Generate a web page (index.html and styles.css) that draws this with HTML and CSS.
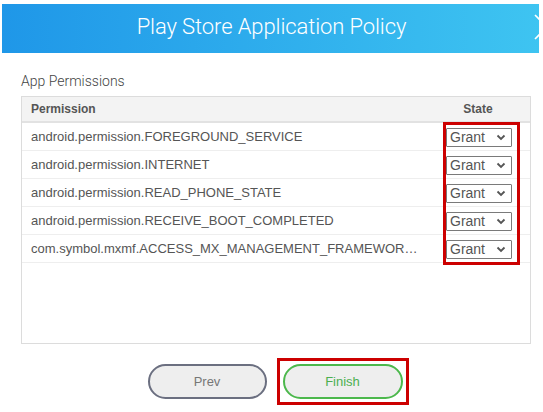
FILE: index.html
```html
<!DOCTYPE html>
<html>
<head>
<meta charset="utf-8">
<link rel="stylesheet" href="styles.css">
</head>
<body>
<div class="header">
  <div class="title">Play Store Application Policy</div>
  <div class="close"><svg width="20" height="28" viewBox="0 0 20 28"><path d="M2 2 L14 14 L2 26" fill="none" stroke="#fff" stroke-width="1.6"/></svg></div>
</div>
<div class="content">
  <div class="label">App Permissions</div>
  <div class="grid">
    <div class="grid-head">
      <div class="col-perm">Permission</div>
      <div class="col-state">State</div>
    </div>
    <div class="row"><div class="col-perm">android.permission.FOREGROUND_SERVICE</div><div class="col-state"><div class="select">Grant<svg class="chev" width="10" height="7" viewBox="0 0 10 7"><path d="M1.5 1.5 L5 5 L8.5 1.5" fill="none" stroke="#555" stroke-width="1.8"/></svg></div></div></div>
    <div class="row"><div class="col-perm">android.permission.INTERNET</div><div class="col-state"><div class="select">Grant<svg class="chev" width="10" height="7" viewBox="0 0 10 7"><path d="M1.5 1.5 L5 5 L8.5 1.5" fill="none" stroke="#555" stroke-width="1.8"/></svg></div></div></div>
    <div class="row"><div class="col-perm">android.permission.READ_PHONE_STATE</div><div class="col-state"><div class="select">Grant<svg class="chev" width="10" height="7" viewBox="0 0 10 7"><path d="M1.5 1.5 L5 5 L8.5 1.5" fill="none" stroke="#555" stroke-width="1.8"/></svg></div></div></div>
    <div class="row"><div class="col-perm">android.permission.RECEIVE_BOOT_COMPLETED</div><div class="col-state"><div class="select">Grant<svg class="chev" width="10" height="7" viewBox="0 0 10 7"><path d="M1.5 1.5 L5 5 L8.5 1.5" fill="none" stroke="#555" stroke-width="1.8"/></svg></div></div></div>
    <div class="row"><div class="col-perm">com.symbol.mxmf.ACCESS_MX_MANAGEMENT_FRAMEWORK_PERMISSION</div><div class="col-state"><div class="select">Grant<svg class="chev" width="10" height="7" viewBox="0 0 10 7"><path d="M1.5 1.5 L5 5 L8.5 1.5" fill="none" stroke="#555" stroke-width="1.8"/></svg></div></div></div>
    <div class="highlight state-box"></div>
  </div>
  <div class="buttons">
    <button class="btn btn-prev">Prev</button>
    <div class="finish-wrap"><button class="btn btn-finish">Finish</button></div>
  </div>
</div>
</body>
</html>
```
FILE: styles.css
```css
* { box-sizing: border-box; }
body {
  margin: 0;
  background: #fff;
  font-family: Roboto, "Liberation Sans", Arial, sans-serif;
  color: #555;
}
.header {
  position: relative;
  overflow: hidden;
  margin: 4px 4px 0 2px;
  height: 49px;
  background: linear-gradient(to right, #1f97e8, #3ec4f1);
  display: flex;
  align-items: center;
  justify-content: center;
  padding-bottom: 5px;
}
.title {
  color: #fff;
  font-size: 22px;
  font-weight: 300;
  letter-spacing: -0.1px;
  padding-left: 2px;
}
.close {
  position: absolute;
  right: -8px;
  top: 9px;
  width: 14px;
  height: 28px;
}
.content {
  padding: 0 12px 0 21px;
}
.label {
  margin-top: 19px;
  font-size: 14px;
  font-weight: 300;
  line-height: 18px;
  height: 24px;
  color: #444;
}
.grid {
  position: relative;
  height: 248px;
  border: 1px solid #dcdcdc;
  font-family: "Liberation Sans", Arial, sans-serif;
}
.grid-head {
  display: flex;
  height: 26px;
  align-items: center;
  background: #f3f3f3;
  border-bottom: 2px solid #e2e2e2;
  font-weight: bold;
  font-size: 12px;
  color: #555;
}
.row {
  display: flex;
  align-items: center;
  height: 28px;
  border-bottom: 1px solid #eeeeee;
  font-size: 13px;
  color: #555;
}
.col-perm {
  flex: 1;
  min-width: 0;
  padding-left: 9px;
  padding-right: 15px;
  white-space: nowrap;
  overflow: hidden;
  text-overflow: ellipsis;
}
.col-state {
  width: 90px;
  flex: none;
  display: flex;
  justify-content: center;
  padding-right: 12px;
}
.grid-head .col-state {
  padding-right: 14px;
}
.select {
  width: 66px;
  height: 19px;
  border: 1px solid #7a7a7a;
  border-radius: 1px;
  display: flex;
  align-items: center;
  justify-content: space-between;
  padding: 0 5px 0 3px;
  font-size: 14px;
  color: #555;
  margin-top: 1px;
}
.chev { display: block; }
.highlight {
  position: absolute;
  border: 3px solid #cc0000;
}
.state-box {
  left: 421px;
  top: 25px;
  width: 77px;
  height: 143px;
}
.buttons {
  display: flex;
  justify-content: center;
  align-items: center;
  gap: 10px;
  margin-top: 14px;
  padding-left: 4px;
}
.btn {
  font-family: "Liberation Sans", Arial, sans-serif;
  font-size: 13px;
  height: 35px;
  border-radius: 18px;
  background: #eeeeee;
  cursor: pointer;
}
.btn-prev {
  width: 119px;
  border: 2px solid #6b6f80;
  color: #777;
}
.finish-wrap {
  border: 3px solid #cc0000;
  padding: 3px;
}
.btn-finish {
  width: 120px;
  border: 2px solid #4cb84c;
  color: #4caf50;
  display: block;
}
```
